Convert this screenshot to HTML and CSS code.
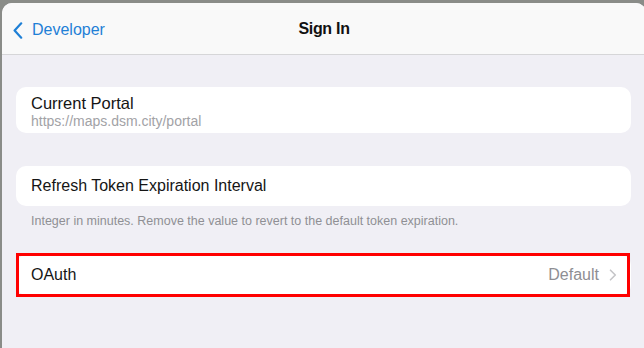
FILE: index.html
```html
<!DOCTYPE html>
<html lang="en">
<head>
<meta charset="utf-8">
<title>Sign In</title>
<link rel="stylesheet" href="styles.css">
</head>
<body>
<div class="sheet">
  <header class="nav">
    <a class="back" href="#">
      <svg class="back-icon" width="10" height="17" viewBox="0 0 10 17" aria-hidden="true"><path d="M8.2 1.3 L1.6 8.5 L8.2 15.7" fill="none" stroke="currentColor" stroke-width="2.2" stroke-linecap="round" stroke-linejoin="round"/></svg>
      <span>Developer</span>
    </a>
    <h1 class="title">Sign In</h1>
  </header>
  <main class="content">
    <section class="group group-portal">
      <div class="card">
        <div class="row row-two">
          <div class="row-title">Current Portal</div>
          <div class="row-sub">https://maps.dsm.city/portal</div>
        </div>
      </div>
    </section>
    <section class="group group-token">
      <div class="card">
        <div class="row">
          <span class="row-title">Refresh Token Expiration Interval</span>
        </div>
      </div>
      <p class="footer">Integer in minutes. Remove the value to revert to the default token expiration.</p>
    </section>
    <section class="group group-oauth">
      <div class="card card-highlight">
        <div class="row">
          <span class="row-title">OAuth</span>
          <span class="row-value">Default</span>
          <svg class="disclosure" width="8" height="12" viewBox="0 0 8 12" aria-hidden="true"><path d="M1.5 1.2 L6.3 6 L1.5 10.8" fill="none" stroke="currentColor" stroke-width="1.6" stroke-linecap="round" stroke-linejoin="round"/></svg>
        </div>
        <div class="annotation"></div>
      </div>
    </section>
  </main>
</div>
</body>
</html>
```
FILE: styles.css
```css
* { box-sizing: border-box; }
html, body { margin: 0; padding: 0; }
body {
  width: 644px;
  height: 348px;
  overflow: hidden;
  background: #8a8c88;
  font-family: "Liberation Sans", Arial, sans-serif;
  padding-top: 3px;
}
.sheet {
  margin-left: 2px;
  width: 644px;
  height: 345px;
  border-radius: 10px 10px 0 0;
  overflow: hidden;
  background: #f0eff5;
  display: flex;
  flex-direction: column;
}
.nav {
  position: relative;
  height: 52px;
  flex: none;
  background: #f9f9f9;
  border-bottom: 1px solid #d6d6d8;
  display: flex;
  align-items: center;
  justify-content: center;
}
.back {
  position: absolute;
  left: 11px;
  top: 18px;
  display: flex;
  align-items: center;
  gap: 9px;
  color: #1f80d6;
  text-decoration: none;
  font-size: 16px;
  line-height: 18px;
}
.back-icon { display: block; }
.title {
  margin: 0;
  font-size: 16px;
  font-weight: bold;
  color: #111;
  letter-spacing: -0.3px;
  margin-top: 1px;
}
.content {
  flex: 1;
  padding: 0 15px 0 14px;
  display: flex;
  flex-direction: column;
}
.group-portal { margin-top: 32px; }
.group-token { margin-top: 33px; }
.group-oauth { margin-top: 26px; }
.card {
  background: #fff;
  border-radius: 10px;
}
.row {
  height: 40px;
  padding: 0 14px 0 15px;
  display: flex;
  align-items: center;
}
.row-two {
  height: 46px;
  flex-direction: column;
  align-items: flex-start;
  justify-content: flex-start;
  padding-top: 6px;
}
.row-title {
  font-size: 16px;
  line-height: 20px;
  color: #151515;
  flex: 1;
}
.row-two .row-title { flex: none; font-size: 16.5px; }
.row-sub {
  font-size: 14px;
  line-height: 16px;
  color: #a2a2a6;
}
.footer {
  margin: 0;
  padding: 7px 0 0 15px;
  font-size: 12.5px;
  line-height: 16px;
  color: #8f8f94;
}
.row-value {
  font-size: 16px;
  color: #8e8e93;
  margin-right: 10px;
}
.disclosure { color: #c5c5c8; display: block; }
.card-highlight { position: relative; }
.annotation {
  position: absolute;
  left: 0;
  top: -2px;
  width: 614px;
  height: 44px;
  border: 3px solid #ff0000;
  pointer-events: none;
}
```
